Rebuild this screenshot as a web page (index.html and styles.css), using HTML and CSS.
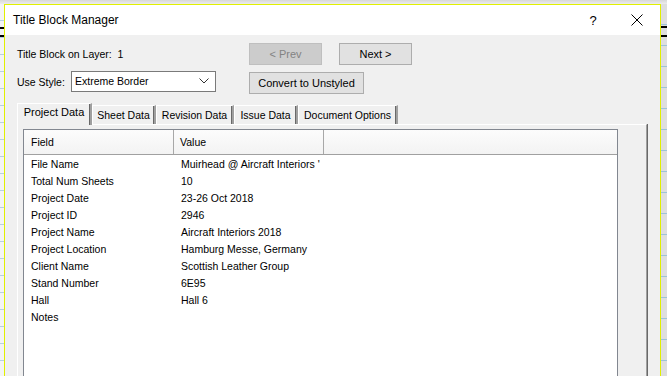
FILE: index.html
```html
<!DOCTYPE html>
<html>
<head>
<meta charset="utf-8">
<link rel="stylesheet" href="styles.css">
</head>
<body>
<div class="desktop">
  <div class="strip-left"></div>
  <div class="strip-right"></div>
  <div class="dialog">
    <div class="titlebar">
      <span class="title">Title Block Manager</span>
      <span class="help">?</span>
      <svg class="close" width="12" height="12" viewBox="0 0 12 12"><path d="M0.5 0.5 L11.5 11.5 M11.5 0.5 L0.5 11.5" stroke="#000" stroke-width="1" fill="none"/></svg>
    </div>
    <div class="body">
      <div class="top">
        <div class="left">
          <div class="line">Title Block on Layer:&nbsp; 1</div>
          <div class="line style-line">
            <span class="lbl">Use Style:</span>
            <div class="select">
              <span>Extreme Border</span>
              <svg width="10" height="6" viewBox="0 0 10 6"><path d="M0.5 0.5 L5 5 L9.5 0.5" stroke="#333" fill="none"/></svg>
            </div>
          </div>
        </div>
        <div class="buttons">
          <div class="btnrow">
            <div class="btn disabled">&lt; Prev</div>
            <div class="btn">Next &gt;</div>
          </div>
          <div class="btnrow">
            <div class="btn wide">Convert to Unstyled</div>
          </div>
        </div>
      </div>
      <div class="tabs">
        <div class="tab active t1">Project Data</div>
        <div class="tab t2">Sheet Data</div>
        <div class="tab t3">Revision Data</div>
        <div class="tab t4">Issue Data</div>
        <div class="tab t5">Document Options</div>
      </div>
      <div class="panel">
        <div class="list">
          <div class="header">
            <div class="hcell c1">Field</div>
            <div class="hcell c2">Value</div>
            <div class="hcell c3"></div>
          </div>
          <div class="rows">
            <div class="row"><span class="c1">File Name</span><span class="c2">Muirhead @ Aircraft Interiors '</span></div>
            <div class="row"><span class="c1">Total Num Sheets</span><span class="c2">10</span></div>
            <div class="row"><span class="c1">Project Date</span><span class="c2">23-26 Oct 2018</span></div>
            <div class="row"><span class="c1">Project ID</span><span class="c2">2946</span></div>
            <div class="row"><span class="c1">Project Name</span><span class="c2">Aircraft Interiors 2018</span></div>
            <div class="row"><span class="c1">Project Location</span><span class="c2">Hamburg Messe, Germany</span></div>
            <div class="row"><span class="c1">Client Name</span><span class="c2">Scottish Leather Group</span></div>
            <div class="row"><span class="c1">Stand Number</span><span class="c2">6E95</span></div>
            <div class="row"><span class="c1">Hall</span><span class="c2">Hall 6</span></div>
            <div class="row"><span class="c1">Notes</span><span class="c2"></span></div>
          </div>
        </div>
      </div>
    </div>
  </div>
</div>
</body>
</html>
```

FILE: styles.css
```css
html, body {
  margin: 0;
  padding: 0;
  width: 667px;
  height: 376px;
  overflow: hidden;
}
body {
  font-family: "Liberation Sans", Arial, sans-serif;
  font-size: 10.5px;
  color: #000;
  background: #e4e4e4;
}
.desktop {
  position: relative;
  width: 667px;
  height: 376px;
  overflow: hidden;
  background: linear-gradient(#d8d8d8, #ececec 4px);
}
.strip-left {
  position: absolute;
  left: 0;
  top: 4px;
  width: 4px;
  height: 372px;
  background:
    linear-gradient(#000, #000) 0 23px / 4px 2px no-repeat,
    linear-gradient(#000, #000) 0 31px / 4px 2px no-repeat,
    repeating-linear-gradient(#f4f4f4 0 16px, #b8cfe0 16px 17px);
}
.strip-right {
  position: absolute;
  right: 0;
  top: 4px;
  width: 6px;
  height: 372px;
  background:
    linear-gradient(#000, #000) 0 22px / 6px 2px no-repeat,
    linear-gradient(#000, #000) 0 31px / 6px 2px no-repeat,
    repeating-linear-gradient(#dedede 0 20px, #9cc3d8 20px 21px);
}
.dialog {
  position: absolute;
  left: 4px;
  top: 4px;
  width: 655px;
  height: 380px;
  border: 1px solid #e0f000;
  background: #f0f0f0;
  display: flex;
  flex-direction: column;
}
.titlebar {
  height: 30px;
  background: #fff;
  display: flex;
  align-items: center;
  flex-shrink: 0;
}
.title {
  font-size: 12px;
  padding-left: 8px;
  flex: 1;
  color: #000;
}
.help {
  font-size: 13px;
  width: 14px;
  text-align: center;
  margin-right: 31px;
}
.close {
  margin-right: 17px;
}
.body {
  flex: 1;
  display: flex;
  flex-direction: column;
  padding: 8px 0 0 12px;
}
.top {
  display: flex;
}
.left {
  width: 232px;
  display: flex;
  flex-direction: column;
  gap: 6px;
}
.line {
  height: 22px;
  display: flex;
  align-items: center;
}
.style-line .lbl {
  width: 54px;
}
.select {
  height: 19px;
  border: 1px solid #7a7a7a;
  background: #fff;
  display: flex;
  align-items: center;
  justify-content: space-between;
  padding: 0 6px 0 3px;
  width: 134px;
  margin-top: -2px;
}
.buttons {
  display: flex;
  flex-direction: column;
  gap: 7px;
}
.btnrow {
  display: flex;
  gap: 17px;
}
.btn {
  width: 71px;
  height: 20px;
  border: 1px solid #adadad;
  background: #e1e1e1;
  display: flex;
  align-items: center;
  justify-content: center;
  font-size: 11px;
}
.btn.disabled {
  background: #cccccc;
  border-color: #bfbfbf;
  color: #838383;
}
.btn.wide {
  width: 113px;
}
.tabs {
  display: flex;
  align-items: flex-end;
  margin-top: 9px;
  height: 21px;
  position: relative;
  z-index: 1;
}
.tab {
  height: 18px;
  display: flex;
  align-items: center;
  justify-content: center;
  border-top: 1px solid #fff;
  border-left: 1px solid #fff;
  border-right: 2px solid #a0a0a0;
  box-shadow: inset -1px 0 0 #696969;
  background: #f0f0f0;
  box-sizing: content-box;
}
.tab.t1 { width: 72px; }
.tab.t2 { width: 61px; }
.tab.t3 { width: 75px; }
.tab.t4 { width: 61px; }
.tab.t5 { width: 97px; }
.tab.active {
  height: 19px;
  margin-bottom: -1px;
  align-items: flex-start;
  padding-top: 2px;
  font-size: 11px;
}
.panel {
  flex: 1;
  width: 623px;
  border-top: 1px solid #fff;
  border-left: 1px solid #fff;
  border-right: 1px solid #a0a0a0;
  box-shadow: 1px 0 0 #696969;
  padding: 4px 0 0 5px;
  display: flex;
  flex-direction: column;
}
.list {
  flex: 1;
  width: 593px;
  border: 1px solid #828790;
  background: #fff;
}
.header {
  display: flex;
  height: 24px;
  border-bottom: 1px solid #a0a0a0;
  background: linear-gradient(#fcfcfc, #f3f3f3);
}
.hcell {
  display: flex;
  align-items: center;
  box-sizing: border-box;
}
.hcell.c1 {
  width: 150px;
  padding-left: 7px;
  border-right: 1px solid #a8a8a8;
}
.hcell.c2 {
  width: 150px;
  padding-left: 6px;
  border-right: 1px solid #a8a8a8;
}
.row {
  display: flex;
  height: 17px;
  align-items: center;
}
.row .c1 {
  width: 150px;
  padding-left: 7px;
  box-sizing: border-box;
}
.row .c2 {
  width: 150px;
  padding-left: 7px;
  box-sizing: border-box;
  white-space: nowrap;
  overflow: hidden;
}
```
